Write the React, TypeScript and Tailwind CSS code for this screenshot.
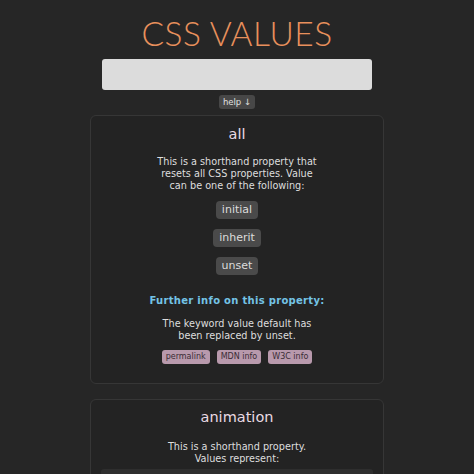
const body = { fontFamily: '"DejaVu Sans", Verdana, sans-serif' };

function ValueChip({ label }: { label: string }) {
  return (
    <span className="rounded-[4px] bg-[#4a4a4a] px-[6px] py-[2px] text-[11px] leading-[14px] text-[#dcdcdc]">
      {label}
    </span>
  );
}

function LinkChip({ label }: { label: string }) {
  return (
    <span className="rounded-[3px] bg-[#b899ac] px-[4px] py-[1px] text-[8px] leading-[12px] text-[#3a2c35]">
      {label}
    </span>
  );
}

export default function App() {
  return (
    <div className="min-h-[474px] w-full overflow-hidden bg-[#262626]" style={body}>
      <div className="flex flex-col items-center">
        <h1
          className="mt-[14px] text-[33.5px] font-light leading-[38px] tracking-[0.5px] text-[#e8905c]"
          style={{ fontFamily: 'Lato, "Open Sans", sans-serif' }}
        >
          CSS VALUES
        </h1>
        <div className="mt-[7px] h-[31px] w-[270px] rounded-[3px] bg-[#dcdcdc]" />
        <span className="mt-[5px] rounded-[3px] bg-[#474747] px-[4px] text-[8.5px] leading-[14px] text-[#e0e0e0]">
          help ↓
        </span>

        {/* card: all */}
        <div className="mt-[6px] flex w-[294px] flex-col items-center rounded-[6px] border border-[#363636] bg-[#232323] pb-[19px]">
          <h2 className="mt-[8px] text-[14.5px] leading-[20px] text-[#eadbe4]">all</h2>
          <p className="mt-[12px] text-center text-[9.7px] leading-[12px] text-[#dedede]">
            This is a shorthand property that
            <br />
            resets all CSS properties. Value
            <br />
            can be one of the following:
          </p>
          <div className="mt-[9px] flex flex-col items-center gap-[10px]">
            <ValueChip label="initial" />
            <ValueChip label="inherit" />
            <ValueChip label="unset" />
          </div>
          <h3 className="mt-[19px] text-[10px] font-bold leading-[14px] tracking-[0.3px] text-[#74c3e6]">
            Further info on this property:
          </h3>
          <p className="mt-[10px] text-center text-[9.7px] leading-[12px] text-[#dedede]">
            The keyword value default has
            <br />
            been replaced by unset.
          </p>
          <div className="mt-[8px] flex gap-[7px]">
            <LinkChip label="permalink" />
            <LinkChip label="MDN info" />
            <LinkChip label="W3C info" />
          </div>
        </div>

        {/* card: animation */}
        <div className="mt-[15px] flex w-[294px] flex-col items-center rounded-t-[6px] border border-[#363636] bg-[#232323] pb-[8px]">
          <h2 className="mt-[7px] text-[14.5px] leading-[20px] text-[#eadbe4]">animation</h2>
          <p className="mt-[14px] text-center text-[9.7px] leading-[12px] text-[#dedede]">
            This is a shorthand property.
            <br />
            Values represent:
          </p>
          <div className="mt-[4px] h-[20px] w-[272px] rounded-[3px] bg-[#2e2e2e]" />
        </div>
      </div>
    </div>
  );
}
